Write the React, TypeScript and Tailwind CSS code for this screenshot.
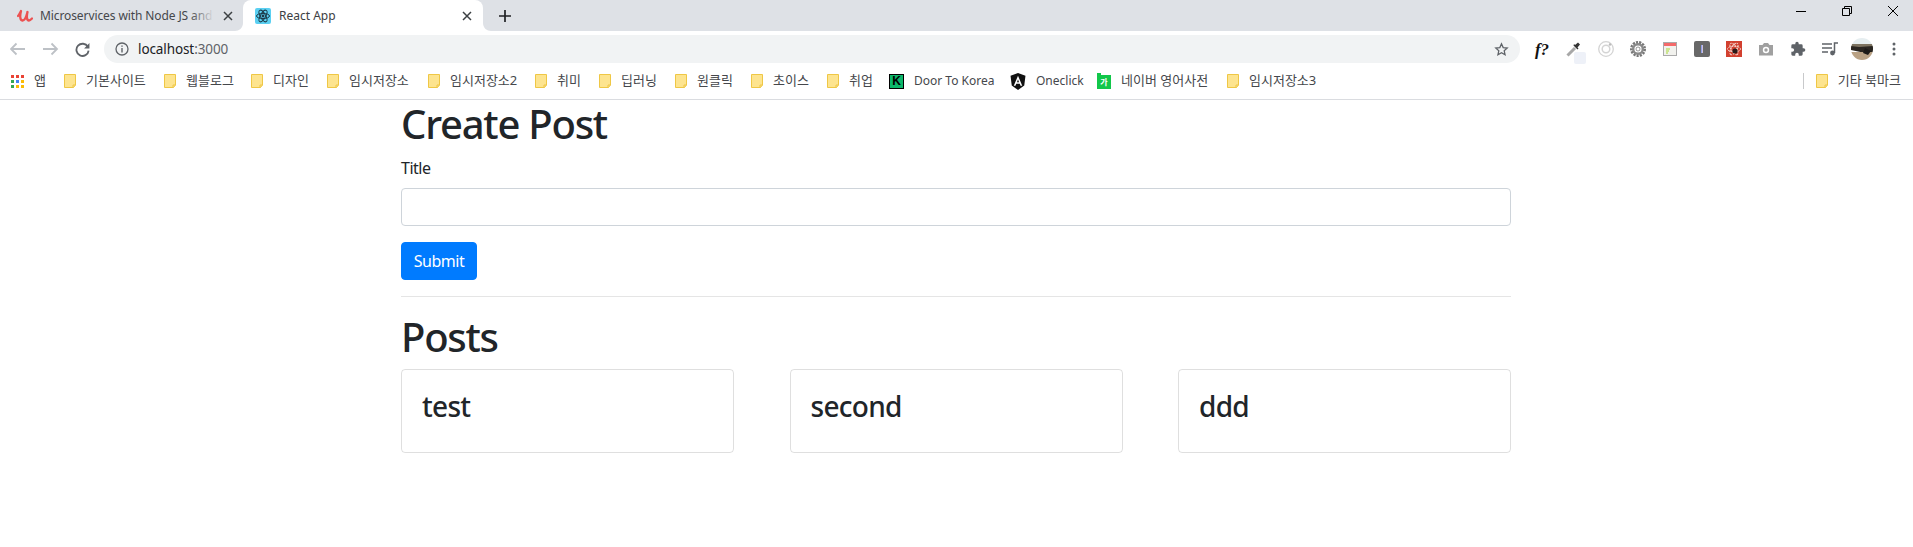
import * as React from 'react';

function Folder() {
  return (
    <svg width="12" height="14" viewBox="0 0 12 14" className="shrink-0">
      <path d="M.5.5h11v10.5l-2 2.5H.5z" fill="#fde48f" stroke="#efc745" />
      <path d="M9 13.500V11h2.500" fill="none" stroke="#efc745" />
    </svg>
  );
}

function AppsIcon() {
  const colors = ['#ea4335', '#ea4335', '#ea4335', '#34a853', '#4285f4', '#fbbc05', '#34a853', '#fbbc05', '#fbbc05'];
  return (
    <div className="grid grid-cols-3 gap-[2px] w-[13px] shrink-0">
      {colors.map((c, i) => (
        <svg key={i} width="3" height="3" viewBox="0 0 3 3"><rect width="3" height="3" fill={c} /></svg>
      ))}
    </div>
  );
}

function KIcon() {
  return (
    <div className="w-[15px] h-[15px] bg-[#0cb76a] border-[1.5px] border-black shrink-0 flex items-center justify-center text-[12px] font-bold text-black leading-none font-['Liberation_Sans',sans-serif]">K</div>
  );
}

function AngularIcon() {
  return (
    <svg width="16" height="17" viewBox="0 0 14 16" className="shrink-0">
      <path d="M7 0l7 2.500-1.100 9.300L7 16 1.100 11.800 0 2.500z" fill="#111" />
      <path d="M7 2.500L3 12h1.600l.8-2h3.200l.8 2H11zM6 8.700l1-2.500 1 2.500z" fill="#fff" />
    </svg>
  );
}

function NaverIcon() {
  return (
    <div className="relative w-[14px] h-[14px] mt-[1px] bg-[#12c74a] shrink-0 flex items-center justify-center text-[8px] font-bold text-white leading-none">
      <span className="absolute -top-[2px] left-0 w-[4px] h-[3px] bg-[#12c74a]" />
      가
    </div>
  );
}

const bookmarks = [
  { label: '기본사이트', w: 'w-[100px]' },
  { label: '웹블로그', w: 'w-[87px]' },
  { label: '디자인', w: 'w-[76px]' },
  { label: '임시저장소', w: 'w-[101px]' },
  { label: '임시저장소2', w: 'w-[107px]' },
  { label: '취미', w: 'w-[64px]' },
  { label: '딥러닝', w: 'w-[76px]' },
  { label: '원클릭', w: 'w-[76px]' },
  { label: '초이스', w: 'w-[76px]' },
  { label: '취업', w: 'w-[62px]' },
];

function Bookmark({ icon, label, className }: { icon: React.ReactNode; label: string; className?: string }) {
  return (
    <div className={`flex items-center shrink-0 whitespace-nowrap ${className ?? ''}`}>
      {icon}
      <span className="ml-[10px]">{label}</span>
    </div>
  );
}

function ToolIcon({ children }: { children: React.ReactNode }) {
  return <div className="w-8 h-6 flex items-center justify-center shrink-0 relative">{children}</div>;
}

function TabStrip() {
  return (
    <div className="h-[31px] bg-[#dee1e6] flex items-stretch text-[12px] text-[#45474b] relative">
      <div className="w-[243px] flex items-center pl-[17px] pr-[10px] shrink-0 relative">
        <svg width="16" height="14" viewBox="0 0 16 14" className="shrink-0">
          <path d="M1 7c1-1 2-3 3-5-1 4-1.500 9 1.500 9.500 3 .2 4-5 5-8.500-1 4-1 8.500 1.500 8.500 1 0 2-1 3-2" fill="none" stroke="#ec5252" strokeWidth="2.300" strokeLinecap="round" strokeLinejoin="round" />
        </svg>
        <div className="ml-[7px] flex-1 relative overflow-hidden whitespace-nowrap tracking-[-.1px]">
          Microservices with Node JS and
          <span className="absolute right-0 top-0 bottom-0 w-6 bg-gradient-to-r from-transparent to-[#dee1e6]" />
        </div>
        <svg width="10" height="10" viewBox="0 0 10 10" className="ml-[9px] shrink-0">
          <path d="M1 1l8 8M9 1l-8 8" stroke="#3c4043" strokeWidth="1.500" />
        </svg>
      </div>
      <div className="w-[240px] bg-white rounded-t-[8px] flex items-center pl-[12px] pr-[11px] shrink-0 relative">
        <svg width="8" height="8" viewBox="0 0 8 8" className="absolute -left-[8px] bottom-0">
          <path d="M8 0v8H0c4 0 8-3 8-8z" fill="#fff" />
        </svg>
        <svg width="16" height="16" viewBox="0 0 16 16" className="shrink-0">
          <rect width="16" height="16" rx="2" fill="#5bd0f2" />
          <g fill="none" stroke="#1c3a47" strokeWidth="1">
            <ellipse cx="8" cy="8" rx="6.500" ry="2.600" />
            <ellipse cx="8" cy="8" rx="6.500" ry="2.600" transform="rotate(60 8 8)" />
            <ellipse cx="8" cy="8" rx="6.500" ry="2.600" transform="rotate(120 8 8)" />
          </g>
          <circle cx="8" cy="8" r="1.400" fill="#1c3a47" />
        </svg>
        <span className="ml-2 flex-1 text-[#3c4043]">React App</span>
        <svg width="10" height="10" viewBox="0 0 10 10" className="shrink-0">
          <path d="M1 1l8 8M9 1l-8 8" stroke="#3c4043" strokeWidth="1.500" />
        </svg>
        <svg width="8" height="8" viewBox="0 0 8 8" className="absolute -right-[8px] bottom-0">
          <path d="M0 0v8h8C4 8 0 5 0 0z" fill="#fff" />
        </svg>
      </div>
      <div className="ml-4 flex items-center">
        <svg width="12" height="12" viewBox="0 0 12 12">
          <path d="M6 0v12M0 6h12" stroke="#202124" strokeWidth="1.700" />
        </svg>
      </div>
      <div className="ml-auto flex items-start pt-[6px] pr-[15px]">
        <svg width="10" height="10" viewBox="0 0 10 10" className="mr-[36px]"><path d="M0 5.500h10" stroke="#000" /></svg>
        <svg width="10" height="10" viewBox="0 0 10 10" className="mr-[36px]">
          <path d="M.500 2.500h7v7h-7zM2.500 2.500v-2h7v7h-2" fill="none" stroke="#000" />
        </svg>
        <svg width="10" height="10" viewBox="0 0 10 10"><path d="M0 0l10 10M10 0L0 10" stroke="#000" /></svg>
      </div>
    </div>
  );
}

function Toolbar() {
  return (
    <div className="h-[34px] pt-[2px] bg-white flex items-center pl-[10px] pr-[3px]">
      <svg width="16" height="14" viewBox="0 0 16 14" className="shrink-0">
        <path d="M15 7H1M6.500 1.500L1 7l5.500 5.500" fill="none" stroke="#bdc1c6" strokeWidth="1.800" />
      </svg>
      <svg width="16" height="14" viewBox="0 0 16 14" className="shrink-0 ml-[17px]">
        <path d="M0 7h14M8.500 1.500L14 7l-5.500 5.500" fill="none" stroke="#bdc1c6" strokeWidth="1.800" />
      </svg>
      <svg width="15" height="15" viewBox="0 0 14 14" className="shrink-0 ml-4">
        <path d="M12 4.500A5.700 5.700 0 1 0 12.700 8" fill="none" stroke="#5f6368" strokeWidth="1.700" />
        <path d="M13.500 1v5h-5z" fill="#5f6368" />
      </svg>
      <div className="ml-[14px] h-[28px] w-[1416px] rounded-full bg-[#f1f3f4] flex items-center pl-[11px] pr-[11px] shrink-0">
        <svg width="14" height="14" viewBox="0 0 14 14" className="shrink-0">
          <circle cx="7" cy="7" r="6" fill="none" stroke="#5f6368" strokeWidth="1.300" />
          <path d="M7 6v4.500M7 3.500v1.300" stroke="#5f6368" strokeWidth="1.400" />
        </svg>
        <span className="ml-[9px] text-[13.500px] tracking-[-.1px] text-[#202124] flex-1">localhost<span className="text-[#5f6368]">:3000</span></span>
        <svg width="15" height="15" viewBox="0 0 24 24" className="shrink-0">
          <path d="M12 3l2.700 6 6.500.7-4.900 4.300 1.400 6.400L12 17l-5.700 3.400 1.400-6.400L2.800 9.700 9.300 9z" fill="none" stroke="#5f6368" strokeWidth="2" />
        </svg>
      </div>
      <div className="flex items-center ml-[6px]">
        <ToolIcon><span className="font-['Liberation_Serif',serif] italic font-bold text-[17px] text-[#111] leading-none">f?</span></ToolIcon>
        <ToolIcon>
          <svg width="16" height="16" viewBox="0 0 16 16">
            <path d="M1.500 14.500L9 7" stroke="#a8a8a8" strokeWidth="3" />
            <path d="M7.500 4.500l4 4 1-1-1-1 2.500-3-2-2-3 2.500-1-1z" fill="#333" />
          </svg>
          <span className="absolute left-[16px] top-[15px] w-3 h-3 rounded-[2px] bg-[#eef1f8]" />
        </ToolIcon>
        <ToolIcon>
          <svg width="16" height="16" viewBox="0 0 16 16" fill="none" stroke="#d4d4d4">
            <circle cx="8" cy="8" r="7.300" strokeWidth="1.300" />
            <circle cx="8" cy="8" r="3.800" strokeWidth="1.500" />
            <circle cx="12" cy="3.500" r="1.200" fill="#bbb" stroke="none" />
          </svg>
        </ToolIcon>
        <ToolIcon>
          <svg width="16" height="16" viewBox="0 0 16 16">
            <circle cx="8" cy="8" r="6.300" fill="none" stroke="#777" strokeWidth="3.400" strokeDasharray="2 1" />
            <circle cx="8" cy="8" r="4.800" fill="none" stroke="#8a8a8a" strokeWidth="2.400" />
            <circle cx="8" cy="8" r="2" fill="#fff" stroke="#555" strokeWidth=".6" />
          </svg>
        </ToolIcon>
        <ToolIcon>
          <svg width="14" height="14" viewBox="0 0 14 14">
            <rect x=".5" y=".5" width="13" height="13" fill="#f2f2ee" stroke="#aaa" />
            <rect x="1" y="1" width="12" height="3" fill="#f46a6a" />
            <path d="M3 7h4M3 9h3M3 11h2" stroke="#a6d936" />
          </svg>
        </ToolIcon>
        <ToolIcon>
          <div className="w-4 h-4 rounded-[2px] bg-[#686868] flex justify-center items-center">
            <span className="w-[2px] h-2 bg-gradient-to-r from-[#6d8df0] to-[#f0d0d0]" />
          </div>
        </ToolIcon>
        <ToolIcon>
          <svg width="16" height="16" viewBox="0 0 16 16">
            <rect width="16" height="16" fill="#d2402f" />
            <g fill="none" stroke="#f4d6d0" strokeWidth="1" strokeDasharray="2 .8">
              <ellipse cx="8" cy="8" rx="6.500" ry="2.800" />
              <ellipse cx="8" cy="8" rx="6.500" ry="2.800" transform="rotate(60 8 8)" />
              <ellipse cx="8" cy="8" rx="6.500" ry="2.800" transform="rotate(120 8 8)" />
            </g>
            <circle cx="9" cy="10" r="2.600" fill="#2a1a18" />
          </svg>
        </ToolIcon>
        <ToolIcon>
          <svg width="16" height="14" viewBox="0 0 16 14">
            <path d="M1 3h3.500L6 1h4l1.500 2H15v10.500H1z" fill="#a0a0a0" />
            <circle cx="8" cy="8" r="3.200" fill="#fff" />
            <circle cx="8" cy="8" r="1.700" fill="#a0a0a0" />
          </svg>
        </ToolIcon>
        <ToolIcon>
          <svg width="16" height="16" viewBox="0 0 24 24">
            <path d="M20.500 11H19V7a2 2 0 0 0-2-2h-4V3.500a2.500 2.500 0 0 0-5 0V5H4a2 2 0 0 0-2 2v3.800h1.500a2.700 2.700 0 0 1 0 5.400H2V20a2 2 0 0 0 2 2h3.800v-1.500a2.700 2.700 0 0 1 5.400 0V22H17a2 2 0 0 0 2-2v-4h1.500a2.500 2.500 0 0 0 0-5z" fill="#5f6368" />
          </svg>
        </ToolIcon>
        <ToolIcon>
          <svg width="16" height="14" viewBox="0 0 16 14">
            <path d="M0 2h10M0 6h10M0 10h6" stroke="#5f6368" strokeWidth="1.500" />
            <path d="M12.500 11V1H16" fill="none" stroke="#5f6368" strokeWidth="1.500" />
            <circle cx="10.500" cy="11" r="2.400" fill="#5f6368" />
          </svg>
        </ToolIcon>
        <ToolIcon>
          <svg width="22" height="22" viewBox="0 0 22 22">
            <defs><clipPath id="avatar"><circle cx="11" cy="11" r="11" /></clipPath></defs>
            <g clipPath="url(#avatar)">
              <rect width="22" height="8" fill="#e6eef0" />
              <rect y="6" width="22" height="5" fill="#7d7360" />
              <path d="M0 8l8 1 14-1v6l-8 1-14-3z" fill="#2a2621" />
              <rect y="14" width="22" height="8" fill="#b9a184" />
              <path d="M14 10l6 3-3 4-5-2z" fill="#1c1a18" />
            </g>
          </svg>
        </ToolIcon>
        <ToolIcon>
          <svg width="4" height="14" viewBox="0 0 4 14">
            <circle cx="2" cy="2" r="1.500" fill="#5f6368" />
            <circle cx="2" cy="7" r="1.500" fill="#5f6368" />
            <circle cx="2" cy="12" r="1.500" fill="#5f6368" />
          </svg>
        </ToolIcon>
      </div>
    </div>
  );
}

function BookmarksBar() {
  return (
    <div className="h-[35px] pb-[2px] bg-white border-b border-[#dadce0] flex items-center pl-[11px] pr-[12px] text-[13px] text-[#45474b] font-['Noto_Sans','Noto_Sans_CJK_KR',sans-serif]">
      <Bookmark icon={<AppsIcon />} label="앱" className="w-[53px]" />
      {bookmarks.map((b) => (
        <Bookmark key={b.label} icon={<Folder />} label={b.label} className={b.w} />
      ))}
      <Bookmark icon={<KIcon />} label="Door To Korea" className="w-[121px] text-[12px]" />
      <Bookmark icon={<AngularIcon />} label="Oneclick" className="w-[87px] text-[12px]" />
      <Bookmark icon={<NaverIcon />} label="네이버 영어사전" className="w-[130px]" />
      <Bookmark icon={<Folder />} label="임시저장소3" />
      <div className="ml-auto w-px h-[16px] bg-[#c8c9cb] mr-[12px]" />
      <Bookmark icon={<Folder />} label="기타 북마크" />
    </div>
  );
}

function PostCard({ title }: { title: string }) {
  return (
    <div className="w-[30%] border border-black/[.125] rounded-[4px] p-5">
      <h3 className="text-[28px] leading-[33.6px] font-medium tracking-[-.7px] mb-2">{title}</h3>
    </div>
  );
}

export default function App() {
  return (
    <div className="min-h-[547px] bg-white font-['Noto_Sans','Noto_Sans_CJK_KR',sans-serif]">
      <TabStrip />
      <Toolbar />
      <BookmarksBar />
      <div className="pr-px">
        <div className="w-[1140px] mx-auto px-[15px] text-[#212529] text-[16px]">
          <h1 className="text-[40px] leading-[48px] font-medium tracking-[-1.250px] mb-2">Create Post</h1>
          <form>
            <div className="mb-4">
              <label className="block leading-6 mb-2 tracking-[-.5px]">Title</label>
              <input className="block w-full h-[38px] border border-[#ced4da] rounded-[4px] bg-white px-3" />
            </div>
            <button type="button" className="h-[38px] w-[76px] bg-[#007bff] border border-[#007bff] text-white rounded-[4px] leading-6 tracking-[-.5px]">Submit</button>
          </form>
          <hr className="mt-4 mb-4 border-black/10" />
          <h1 className="text-[40px] leading-[48px] font-medium tracking-[-1.250px] mb-2">Posts</h1>
          <div className="flex flex-row flex-wrap justify-between">
            <PostCard title="test" />
            <PostCard title="second" />
            <PostCard title="ddd" />
          </div>
        </div>
      </div>
    </div>
  );
}
